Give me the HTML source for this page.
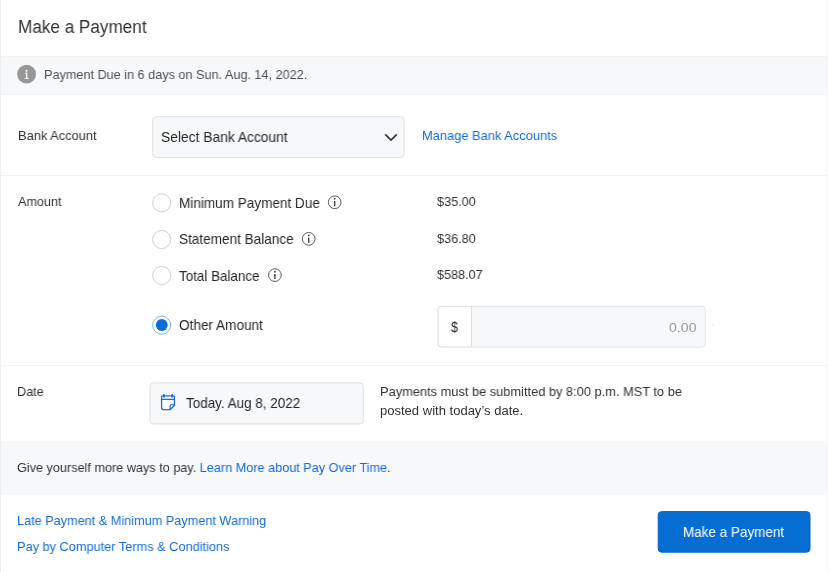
<!DOCTYPE html>
<html><head><meta charset="utf-8">
<style>
*{box-sizing:border-box;margin:0;padding:0}
html,body{width:828px;height:572px;overflow:hidden;background:#fff}
body{font-family:"Liberation Sans",sans-serif;color:#333;position:relative}
.abs{position:absolute}
.t{position:absolute;white-space:nowrap;line-height:20px;transform-origin:0 50%;will-change:transform}
.band{position:absolute;left:0;width:828px;background:#f7f8fa}
.hr{position:absolute;left:0;width:828px;height:1px;background:#f3f3f3}
</style></head><body>
<div class="band" style="top:56px;height:39px;border-top:1px solid #f1f2f4;border-bottom:1px solid #f1f2f4"></div>
<div class="band" style="top:441px;height:54px"></div>
<div class="hr" style="top:175px"></div>
<div class="hr" style="top:365px"></div>
<div class="abs" style="left:0;top:0;width:1px;height:572px;background:#efefef"></div>
<div class="abs" style="left:827px;top:0;width:1px;height:572px;background:#f5f5f5"></div>
<svg class="abs" style="left:0;top:0" width="828" height="572" viewBox="0 0 828 572">
<g transform="translate(17.2 64.8)"><circle cx="9.4" cy="9.4" r="9.4" fill="#979798"/><circle cx="9.4" cy="6.0" r="1.05" fill="#fff"/><path d="M7.9 7.9H10.05V12.8Q10.05 13.35 11.6 13.45V14.3H7.5V13.45Q8.85 13.35 8.85 12.8V9.1Q8.85 8.75 7.9 8.7Z" fill="#fff"/></g>
<rect x="152.8" y="116.7" width="251.40" height="40.80" rx="3.5" fill="#f7f8fa" stroke="#dfdfdf" stroke-width="1"/>
<path d="M385.2 134.4L391 140.1L396.8 134.4" fill="none" stroke="#383838" stroke-width="1.8"/>
<circle cx="161.7" cy="202.9" r="9.05" fill="#fff" stroke="#cfcfcf" stroke-width="1"/>
<circle cx="161.7" cy="239.5" r="9.05" fill="#fff" stroke="#cfcfcf" stroke-width="1"/>
<circle cx="161.7" cy="275.5" r="9.05" fill="#fff" stroke="#cfcfcf" stroke-width="1"/>
<circle cx="161.7" cy="325.2" r="9.05" fill="#fff" stroke="#7fb2ec" stroke-width="1"/>
<circle cx="161.8" cy="325" r="5.9" fill="#0b6cd8"/>
<g transform="translate(334.7 202.3)"><circle r="6.35" fill="none" stroke="#5a5a5a" stroke-width="1"/><circle cy="-3.45" r="0.95" fill="#444"/><path d="M0 -1.2V4" fill="none" stroke="#484848" stroke-width="1.45"/></g>
<g transform="translate(308.7 238.85)"><circle r="6.35" fill="none" stroke="#5a5a5a" stroke-width="1"/><circle cy="-3.45" r="0.95" fill="#444"/><path d="M0 -1.2V4" fill="none" stroke="#484848" stroke-width="1.45"/></g>
<g transform="translate(274.9 275.1)"><circle r="6.35" fill="none" stroke="#5a5a5a" stroke-width="1"/><circle cy="-3.45" r="0.95" fill="#444"/><path d="M0 -1.2V4" fill="none" stroke="#484848" stroke-width="1.45"/></g>
<rect x="437.9" y="306.3" width="267.30" height="40.70" rx="3.5" fill="#fff" stroke="#dbdbdb" stroke-width="1"/>
<path d="M471.5 306.8H702.2Q704.7 306.8 704.7 309.3V344Q704.7 346.5 702.2 346.5H471.5Z" fill="#f7f8fa"/>
<path d="M471.5 306.3V347" stroke="#dedede" stroke-width="1"/>
<circle cx="712.9" cy="325" r="0.7" fill="#e2e2e2"/>
<rect x="150.0" y="382.9" width="213.30" height="41.10" rx="3.5" fill="#f7f8fa" stroke="#dfdfdf" stroke-width="1"/>
<g fill="none" stroke="#1a6ddb" stroke-width="1.35" stroke-linejoin="round" stroke-linecap="round"><path d="M163.1 395.8H172.95Q174.45 395.8 174.45 397.3V405.3L170.3 409.55H163.1Q161.6 409.55 161.6 408.05V397.3Q161.6 395.8 163.1 395.8Z" fill="#fff"/><path d="M161.6 399.4H174.45"/><path d="M163.9 395V396.6M172.2 395V396.6" stroke-width="2.1"/><path d="M174.3 404.75H171.4Q169.95 404.75 169.95 406.2V409.3" stroke-width="1.2"/></g>
<rect x="658.2" y="511.6" width="151.8" height="40.6" rx="3.5" fill="#066ed2" stroke="#0565cc" stroke-width="1"/>
</svg>
<div class="t" style="left:17.73px;top:17px;font-size:17.6px;color:#333;transform:scaleX(0.9737)">Make a Payment</div>
<div class="t" style="left:44.03px;top:65px;font-size:13.0px;color:#505050;transform:scaleX(0.9739)">Payment Due in 6 days on Sun. Aug. 14, 2022.</div>
<div class="t" style="left:17.51px;top:126px;font-size:13.0px;color:#333;transform:scaleX(0.9873)">Bank Account</div>
<div class="t" style="left:161.21px;top:127px;font-size:13.9px;color:#282828;transform:scaleX(0.9944)">Select Bank Account</div>
<div class="t" style="left:422.01px;top:126px;font-size:13.0px;color:#146cd2;transform:scaleX(0.9896)">Manage Bank Accounts</div>
<div class="t" style="left:17.50px;top:192px;font-size:13.0px;color:#333;transform:scaleX(0.9689)">Amount</div>
<div class="t" style="left:179.02px;top:193px;font-size:13.9px;color:#282828;transform:scaleX(0.9755)">Minimum Payment Due</div>
<div class="t" style="left:179.02px;top:229px;font-size:13.9px;color:#282828;transform:scaleX(0.9763)">Statement Balance</div>
<div class="t" style="left:179.40px;top:266px;font-size:13.9px;color:#282828;transform:scaleX(0.9651)">Total Balance</div>
<div class="t" style="left:179.02px;top:315px;font-size:13.9px;color:#282828;transform:scaleX(0.9794)">Other Amount</div>
<div class="t" style="left:437.40px;top:192px;font-size:13.0px;color:#333;transform:scaleX(0.9769)">$35.00</div>
<div class="t" style="left:437.40px;top:229px;font-size:13.0px;color:#333;transform:scaleX(0.9769)">$36.80</div>
<div class="t" style="left:437.40px;top:265px;font-size:13.0px;color:#333;transform:scaleX(0.9696)">$588.07</div>
<div class="t" style="left:450.80px;top:317px;font-size:14.0px;color:#282828;transform:scaleX(0.9000)">$</div>
<div class="t" style="left:668.94px;top:318px;font-size:13.3px;color:#9a9a9a;transform:scaleX(1.0625)">0.00</div>
<div class="t" style="left:17.43px;top:382px;font-size:13.0px;color:#333;transform:scaleX(0.9692)">Date</div>
<div class="t" style="left:186.20px;top:393px;font-size:13.9px;color:#282828;transform:scaleX(0.9684)">Today. Aug 8, 2022</div>
<div class="t" style="left:380.21px;top:382px;font-size:13.0px;color:#333;transform:scaleX(0.9862)">Payments must be submitted by 8:00 p.m. MST to be</div>
<div class="t" style="left:380.20px;top:401px;font-size:13.0px;color:#333;transform:scaleX(1.0021)">posted with today’s date.</div>
<div class="t" style="left:17.33px;top:458px;font-size:13.0px;color:#333;transform:scaleX(0.9743)">Give yourself more ways to pay. <span style="color:#146cd2">Learn More about Pay Over Time</span>.</div>
<div class="t" style="left:17.02px;top:511px;font-size:13.0px;color:#146cd2;transform:scaleX(0.9763)">Late Payment &amp; Minimum Payment Warning</div>
<div class="t" style="left:17.02px;top:537px;font-size:13.0px;color:#146cd2;transform:scaleX(0.9814)">Pay by Computer Terms &amp; Conditions</div>
<div class="t" style="left:683.33px;top:522px;font-size:13.9px;color:#fff;transform:scaleX(0.9699)">Make a Payment</div>
</body></html>
